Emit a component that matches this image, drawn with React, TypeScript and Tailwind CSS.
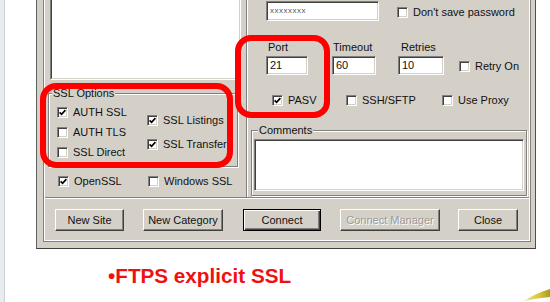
import React from "react";
import clsx from "clsx";

const sunken =
  "border border-t-[#808080] border-l-[#808080] border-r-white border-b-white shadow-[inset_1px_1px_0_#404040,inset_-1px_-1px_0_#d4d0c8]";
const raised =
  "border border-t-white border-l-white border-r-[#404040] border-b-[#404040] shadow-[inset_-1px_-1px_0_#808080]";

const CheckBox: React.FC<{
  label: string;
  checked?: boolean;
  className?: string;
}> = ({ label, checked, className }) => (
  <div className={clsx("flex h-[11px] items-center", className)}>
    <span
      className={clsx(
        "flex h-[11px] w-[11px] shrink-0 items-center justify-center bg-white",
        sunken,
      )}
    >
      {checked && (
        <svg width="7" height="7" viewBox="0 0 7 7">
          <path d="M0.6 3.3 L2.6 5.3 L6.4 1.2" fill="none" stroke="#000" strokeWidth="1.7" />
        </svg>
      )}
    </span>
    <span className="ml-[5px] whitespace-nowrap leading-[13px]">{label}</span>
  </div>
);

const GroupBox: React.FC<{
  label: string;
  className?: string;
  labelClass?: string;
  children?: React.ReactNode;
}> = ({ label, className, labelClass, children }) => (
  <div
    className={clsx(
      "relative border border-[#808080] shadow-[inset_1px_1px_0_#fff,1px_1px_0_#fff]",
      className,
    )}
  >
    <span
      className={clsx(
        "absolute -top-[7px] bg-[#d4d0c8] px-px leading-[13px]",
        labelClass,
      )}
    >
      {label}
    </span>
    {children}
  </div>
);

const Button: React.FC<{
  label: string;
  className?: string;
  isDefault?: boolean;
  disabled?: boolean;
}> = ({ label, className, isDefault, disabled }) => (
  <div
    className={clsx(
      "flex h-[22px] items-center justify-center whitespace-nowrap",
      isDefault
        ? "border border-black shadow-[inset_1px_1px_0_#fff,inset_-1px_-1px_0_#404040,inset_-2px_-2px_0_#808080]"
        : raised,
      disabled && "text-[#9a9a9a] [text-shadow:1px_1px_0_#fff]",
      className,
    )}
  >
    {label}
  </div>
);

const Field: React.FC<{ className?: string; children?: React.ReactNode }> = ({
  className,
  children,
}) => <div className={clsx("bg-white pl-[3px] leading-[17px]", sunken, className)}>{children}</div>;

const Dialog: React.FC = () => (
  <div className="h-[249px] w-[500px] border-b border-l border-r border-b-[#404040] border-l-[#606060] border-r-[#505050] bg-[#d4d0c8] pb-[6px] pl-[6px] pr-[4px] text-[11px] text-[#111]">
    <div className="h-full border-b border-l border-r border-[#808080]">
      <div className="flex h-full flex-col border-b border-l border-r border-white">
        {/* top section */}
        <div className="flex h-[197px]">
          {/* left column */}
          <div className="flex w-[201px] flex-col">
            <div className="ml-[5px] h-[80px] w-[191px] border-b border-l border-r border-b-white border-l-[#808080] border-r-white">
              <div className="h-full border-b border-l border-r border-b-[#d4d0c8] border-l-[#404040] border-r-[#d4d0c8] bg-white" />
            </div>

            <GroupBox label="SSL Options" className="ml-[3px] mt-[13px] h-[74px] w-[190px]" labelClass="left-[3px]">
              <div className="flex">
                <div className="flex w-[98px] flex-col gap-[9px] pl-[8px] pt-[13px]">
                  <CheckBox label="AUTH SSL" checked />
                  <CheckBox label="AUTH TLS" />
                  <CheckBox label="SSL Direct" />
                </div>
                <div className="flex flex-col gap-[13px] pt-[21px]">
                  <CheckBox label="SSL Listings" checked />
                  <CheckBox label="SSL Transfers" checked />
                </div>
              </div>
            </GroupBox>

            <div className="ml-[13px] mt-[9px] flex">
              <CheckBox label="OpenSSL" checked className="w-[90px]" />
              <CheckBox label="Windows SSL" />
            </div>
          </div>

          <div className="w-[2px] border-l border-r border-l-[#808080] border-r-white" />

          {/* right column */}
          <div className="flex flex-1 flex-col">
            <div className="mt-[1px] flex h-[20px] items-center">
              <Field className="ml-[18px] h-[20px] w-[113px] text-[8px] tracking-[0.5px] text-[#555]">xxxxxxxx</Field>
              <CheckBox label="Don't save password" className="ml-[18px] mt-[3px]" />
            </div>

            <div className="mt-[20px] flex">
              <div className="ml-[18px] flex w-[42px] flex-col">
                <span className="ml-[2px] h-[13px] leading-[13px]">Port</span>
                <Field className="mt-[2px] h-[19px]">21</Field>
              </div>
              <div className="ml-[24px] flex w-[44px] flex-col">
                <span className="ml-[1px] h-[13px] leading-[13px]">Timeout</span>
                <Field className="mt-[2px] h-[19px]">60</Field>
              </div>
              <div className="ml-[22px] flex w-[46px] flex-col">
                <span className="ml-[3px] h-[13px] leading-[13px]">Retries</span>
                <Field className="mt-[2px] h-[19px]">10</Field>
              </div>
              <CheckBox label="Retry On" className="mb-[3px] ml-[15px] self-end" />
            </div>

            <div className="ml-[24px] mt-[20px] flex">
              <CheckBox label="PASV" checked className="w-[74px]" />
              <CheckBox label="SSH/SFTP" className="w-[96px]" />
              <CheckBox label="Use Proxy" />
            </div>

            <GroupBox label="Comments" className="ml-[3px] mt-[24px] h-[66px] w-[276px]" labelClass="left-[6px]">
              <div className={clsx("ml-[2px] mt-[8px] h-[52px] w-[270px] bg-white", sunken)} />
            </GroupBox>
          </div>
        </div>

        <div className="h-[2px] border-b border-t border-b-white border-t-[#808080]" />

        {/* buttons */}
        <div className="flex pl-[10px] pt-[10px]">
          <Button label="New Site" className="w-[69px]" />
          <Button label="New Category" className="ml-[19px] w-[80px]" />
          <Button label="Connect" isDefault className="ml-[20px] w-[78px]" />
          <Button label="Connect Manager" disabled className="ml-[19px] w-[100px]" />
          <Button label="Close" className="ml-[18px] w-[60px]" />
        </div>
      </div>
    </div>
  </div>
);

export default function App() {
  return (
    <div className="relative flex h-[302px] w-[550px] overflow-hidden bg-white font-['Liberation_Sans',Arial,sans-serif]">
      <div className="w-[4px] bg-[#e8ecf0]" />
      <div className="w-px bg-[#cdd2d8]" />
      <div className="ml-[31px] flex flex-col">
        <Dialog />
        <p className="ml-[72px] mt-[15px] text-[20.7px] font-bold leading-[24px] text-[#f01010]">
          •FTPS explicit SSL
        </p>
      </div>

      {/* annotation highlights */}
      <div className="pointer-events-none absolute left-[40px] top-[83px] h-[85px] w-[193px] rounded-[16px] border-[6px] border-[#ff0000]" />
      <div className="pointer-events-none absolute left-[235px] top-[35px] h-[83px] w-[95px] rounded-[16px] border-[6px] border-[#ff0000]" />

      {/* slide corner swoosh */}
      <svg className="absolute left-[522px] top-[284px]" width="28" height="18" viewBox="0 0 28 18">
        <defs>
          <linearGradient id="sw" x1="0" y1="0" x2="1" y2="0">
            <stop offset="0" stopColor="#efe6a0" />
            <stop offset="0.6" stopColor="#d6c43a" />
            <stop offset="1" stopColor="#a89a20" />
          </linearGradient>
        </defs>
        <path d="M2 17 Q14 9 28 5 L28 13 Q16 14 2 17 Z" fill="url(#sw)" />
      </svg>
    </div>
  );
}
